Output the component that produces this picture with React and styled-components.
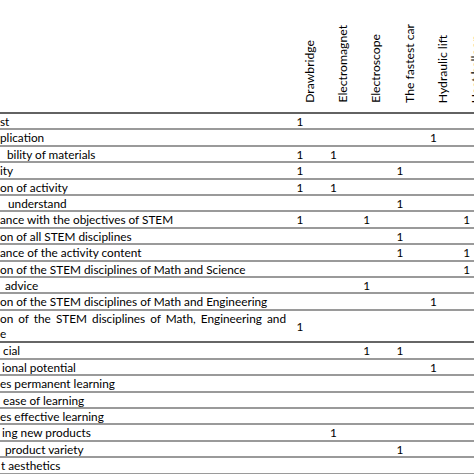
import React from 'react';
import styled, { createGlobalStyle } from 'styled-components';

const GlobalStyle = createGlobalStyle`
  html, body {
    margin: 0;
    padding: 0;
    background: #ffffff;
    overflow: hidden;
  }
  body {
    font-family: Lato, "Liberation Sans", sans-serif;
    color: #000000;
  }
`;

const LABEL_W = 283.33;
const COL_W = 33.33;

const Page = styled.div`
  width: 474px;
  height: 474px;
  overflow: hidden;
`;

const Sheet = styled.div`
  width: ${LABEL_W + COL_W * 6}px;
  font-size: 11.8px;
`;

const HeaderRow = styled.div`
  display: grid;
  grid-template-columns: ${LABEL_W}px repeat(6, ${COL_W}px);
  height: 114px;
  box-sizing: border-box;
  border-bottom: 2px solid #626262;
`;

const HeadCell = styled.div`
  display: flex;
  justify-content: flex-end;
  align-items: flex-end;
  padding-bottom: 9px;
  box-sizing: border-box;
  font-size: 12.2px;
`;

const VerticalText = styled.span`
  writing-mode: vertical-rl;
  transform: rotate(180deg);
  line-height: 15px;
  white-space: nowrap;
`;

const Row = styled.div`
  display: grid;
  grid-template-columns: ${LABEL_W}px repeat(6, ${COL_W}px);
  height: ${({ $tall }) => ($tall ? 32.8 : 16.4)}px;
  box-sizing: border-box;
  border-bottom: 2px solid ${({ $thick }) => ($thick ? '#666666' : '#9a9a9a')};
  align-items: center;
`;

const Label = styled.div`
  white-space: nowrap;
  padding-left: ${({ $indent }) => $indent || 0}px;
  line-height: 15px;
`;

const JustifiedLine = styled.div`
  width: 286px;
  text-align: justify;
  text-align-last: justify;
  white-space: nowrap;
  line-height: 15px;
`;

const Mark = styled.div`
  text-align: center;
  line-height: 15px;
`;

const columns = ['Drawbridge', 'Electromagnet', 'Electroscope', 'The fastest car', 'Hydraulic lift', 'Heat balloon'];

const rows = [
  { label: 'st', marks: [0] },
  { label: 'plication', indent: -2, marks: [4] },
  { label: 'bility of materials', indent: 7, marks: [0, 1] },
  { label: 'ity', marks: [0, 3] },
  { label: 'on of activity', indent: -1, marks: [0, 1] },
  { label: 'understand', indent: 8, marks: [3] },
  { label: 'ance with the objectives of STEM', marks: [0, 2, 5] },
  { label: 'on of all STEM disciplines', indent: -1, marks: [3] },
  { label: 'ance of the activity content', marks: [3, 5] },
  { label: 'on of the STEM disciplines of Math and Science', indent: -1, marks: [5] },
  { label: 'advice', indent: 5, marks: [2] },
  { label: 'on of the STEM disciplines of Math and Engineering', indent: -1, marks: [4] },
  { lines: ['on of the STEM disciplines of Math, Engineering and', 'e'], marks: [0], tall: true, thick: true },
  { label: 'cial', indent: 3, marks: [2, 3] },
  { label: 'ional potential', indent: 2, marks: [4] },
  { label: 'es permanent learning', marks: [] },
  { label: 'ease of learning', indent: 3, marks: [] },
  { label: 'es effective learning', marks: [] },
  { label: 'ing new products', indent: 2, marks: [1] },
  { label: 'product variety', indent: 5, marks: [3] },
  { label: 't aesthetics', indent: 1, marks: [] },
];

const App = () => (
  <Page>
    <GlobalStyle />
    <Sheet>
      <HeaderRow>
        <div />
        {columns.map((c) => (
          <HeadCell key={c}>
            <VerticalText>{c}</VerticalText>
          </HeadCell>
        ))}
      </HeaderRow>
      {rows.map((r, i) => (
        <Row key={i} $tall={r.tall} $thick={r.thick}>
          {r.lines ? (
            <div>
              <JustifiedLine>{r.lines[0]}</JustifiedLine>
              <Label>{r.lines[1]}</Label>
            </div>
          ) : (
            <Label $indent={r.indent}>{r.label}</Label>
          )}
          {columns.map((c, k) => (
            <Mark key={c}>{r.marks.includes(k) ? '1' : ''}</Mark>
          ))}
        </Row>
      ))}
    </Sheet>
  </Page>
);

export default App;
